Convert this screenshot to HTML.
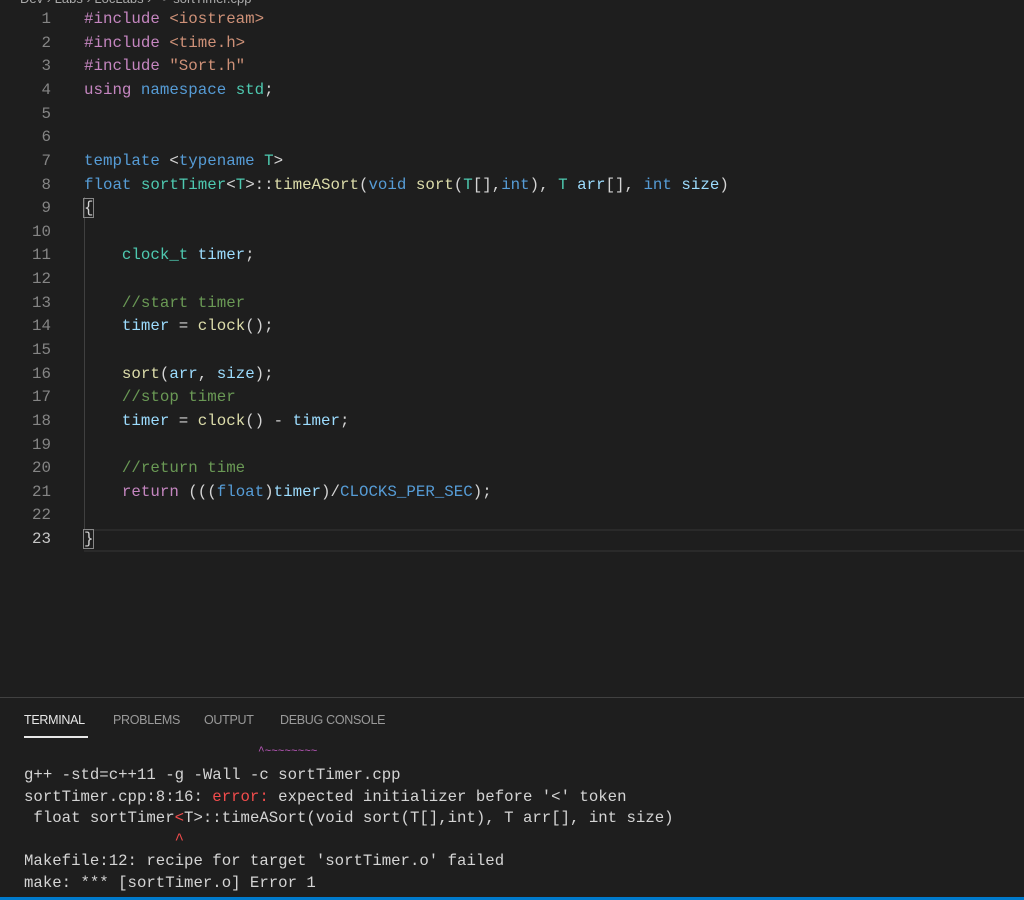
<!DOCTYPE html>
<html><head><meta charset="utf-8"><style>
*{margin:0;padding:0;box-sizing:border-box}
body{width:1024px;height:900px;background:#1e1e1e;overflow:hidden;position:relative;font-family:"Liberation Mono",monospace;}
.l{position:absolute;left:0;height:23.64px;line-height:23.64px;font-size:15.8px;white-space:pre;color:#d4d4d4;width:1024px}
.n{position:absolute;left:0;width:51px;text-align:right;color:#858585}
.c{position:absolute;left:84px}
.p{color:#c586c0}.b{color:#569cd6}.t{color:#4ec9b0}.s{color:#ce9178}.f{color:#dcdcaa}.v{color:#9cdcfe}.g{color:#6a9955}
.br{outline:1px solid #888;}
.tab{position:absolute;top:713px;font-family:"Liberation Sans",sans-serif;font-size:12.5px;color:#9a9a9a;letter-spacing:-0.3px}
.tl{position:absolute;left:24px;height:21.6px;line-height:21.6px;font-size:15.7px;white-space:pre;color:#d4d4d4}
</style></head><body>
<div style="position:absolute;left:20px;top:-9px;font-family:'Liberation Sans',sans-serif;font-size:13px;color:#aaa;white-space:pre">Dev › Labs › LocLabs ›  ⚬ sortTimer.cpp</div>
<div style="position:absolute;left:84px;top:197px;width:1px;height:334px;background:#404040"></div>
<div style="position:absolute;left:84px;top:529px;width:940px;height:23px;border-top:2px solid #2a2a2a;border-bottom:2px solid #2a2a2a"></div>

<div class="l" style="top:8px"><span class="n">1</span><span class="c"><span class="p">#include</span> <span class="s">&lt;iostream&gt;</span></span></div>
<div class="l" style="top:31.6px"><span class="n">2</span><span class="c"><span class="p">#include</span> <span class="s">&lt;time.h&gt;</span></span></div>
<div class="l" style="top:55.3px"><span class="n">3</span><span class="c"><span class="p">#include</span> <span class="s">"Sort.h"</span></span></div>
<div class="l" style="top:78.9px"><span class="n">4</span><span class="c"><span class="p">using</span> <span class="b">namespace</span> <span class="t">std</span>;</span></div>
<div class="l" style="top:102.6px"><span class="n">5</span></div>
<div class="l" style="top:126.2px"><span class="n">6</span></div>
<div class="l" style="top:149.8px"><span class="n">7</span><span class="c"><span class="b">template</span> &lt;<span class="b">typename</span> <span class="t">T</span>&gt;</span></div>
<div class="l" style="top:173.5px"><span class="n">8</span><span class="c"><span class="b">float</span> <span class="t">sortTimer</span>&lt;<span class="t">T</span>&gt;::<span class="f">timeASort</span>(<span class="b">void</span> <span class="f">sort</span>(<span class="t">T</span>[],<span class="b">int</span>), <span class="t">T</span> <span class="v">arr</span>[], <span class="b">int</span> <span class="v">size</span>)</span></div>
<div class="l" style="top:197.1px"><span class="n">9</span><span class="c"><span class="br">{</span></span></div>
<div class="l" style="top:220.8px"><span class="n">10</span></div>
<div class="l" style="top:244.4px"><span class="n">11</span><span class="c">    <span class="t">clock_t</span> <span class="v">timer</span>;</span></div>
<div class="l" style="top:268px"><span class="n">12</span></div>
<div class="l" style="top:291.7px"><span class="n">13</span><span class="c">    <span class="g">//start timer</span></span></div>
<div class="l" style="top:315.3px"><span class="n">14</span><span class="c">    <span class="v">timer</span> = <span class="f">clock</span>();</span></div>
<div class="l" style="top:339px"><span class="n">15</span></div>
<div class="l" style="top:362.6px"><span class="n">16</span><span class="c">    <span class="f">sort</span>(<span class="v">arr</span>, <span class="v">size</span>);</span></div>
<div class="l" style="top:386.2px"><span class="n">17</span><span class="c">    <span class="g">//stop timer</span></span></div>
<div class="l" style="top:409.9px"><span class="n">18</span><span class="c">    <span class="v">timer</span> = <span class="f">clock</span>() - <span class="v">timer</span>;</span></div>
<div class="l" style="top:433.5px"><span class="n">19</span></div>
<div class="l" style="top:457.2px"><span class="n">20</span><span class="c">    <span class="g">//return time</span></span></div>
<div class="l" style="top:480.8px"><span class="n">21</span><span class="c">    <span class="p">return</span> (((<span class="b">float</span>)<span class="v">timer</span>)/<span class="b">CLOCKS_PER_SEC</span>);</span></div>
<div class="l" style="top:504.4px"><span class="n">22</span></div>
<div class="l" style="top:528.1px"><span class="n" style="color:#c6c6c6">23</span><span class="c"><span class="br">}</span></span></div>

<div style="position:absolute;left:0;top:697px;width:1024px;height:1px;background:#414141"></div>
<div class="tab" style="left:24px;color:#e7e7e7">TERMINAL</div>
<div style="position:absolute;left:24px;top:736px;width:64px;height:2px;background:#e7e7e7"></div>
<div class="tab" style="left:113px">PROBLEMS</div>
<div class="tab" style="left:204px">OUTPUT</div>
<div class="tab" style="left:280px">DEBUG CONSOLE</div>

<div class="tl" style="top:742px;left:258px;font-size:11px;color:#c05ac0">^~~~~~~~~</div>
<div class="tl" style="top:765px">g++ -std=c++11 -g -Wall -c sortTimer.cpp</div>
<div class="tl" style="top:787px">sortTimer.cpp:8:16: <span style="color:#f14c4c">error:</span> expected initializer before '&lt;' token</div>
<div class="tl" style="top:808px"> float sortTimer<span style="color:#f14c4c">&lt;</span>T&gt;::timeASort(void sort(T[],int), T arr[], int size)</div>
<div class="tl" style="top:830px;color:#f14c4c">                ^</div>
<div class="tl" style="top:851px">Makefile:12: recipe for target 'sortTimer.o' failed</div>
<div class="tl" style="top:873px">make: *** [sortTimer.o] Error 1</div>
<div style="position:absolute;left:0;top:897px;width:1024px;height:3px;background:#007acc"></div>
</body></html>
